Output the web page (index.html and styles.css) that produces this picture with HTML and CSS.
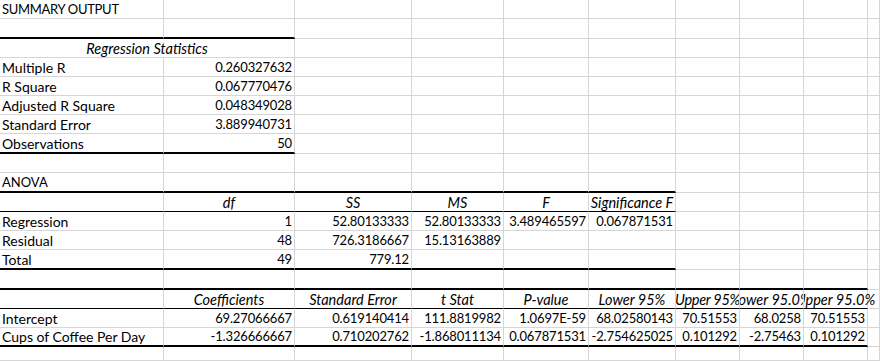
FILE: index.html
```html
<!DOCTYPE html>
<html>
<head>
<meta charset="utf-8">
<link rel="stylesheet" href="styles.css">
<title>Summary Output</title>
</head>
<body>
<div class="sheet">
  <!-- row 1 -->
  <div class="c cap tight">SUMMARY OUTPUT</div><div class="c"></div><div class="c"></div><div class="c"></div><div class="c"></div><div class="c"></div><div class="c"></div><div class="c"></div><div class="c"></div><div class="c"></div>
  <!-- row 2 -->
  <div class="c tb"></div><div class="c tb"></div><div class="c"></div><div class="c"></div><div class="c"></div><div class="c"></div><div class="c"></div><div class="c"></div><div class="c"></div><div class="c"></div>
  <!-- row 3 -->
  <div class="c m span2">Regression Statistics</div><div class="c"></div><div class="c"></div><div class="c"></div><div class="c"></div><div class="c"></div><div class="c"></div><div class="c"></div><div class="c"></div>
  <!-- row 4 -->
  <div class="c">Multiple R</div><div class="c r">0.260327632</div><div class="c"></div><div class="c"></div><div class="c"></div><div class="c"></div><div class="c"></div><div class="c"></div><div class="c"></div><div class="c"></div>
  <!-- row 5 -->
  <div class="c">R Square</div><div class="c r">0.067770476</div><div class="c"></div><div class="c"></div><div class="c"></div><div class="c"></div><div class="c"></div><div class="c"></div><div class="c"></div><div class="c"></div>
  <!-- row 6 -->
  <div class="c">Adjusted R Square</div><div class="c r">0.048349028</div><div class="c"></div><div class="c"></div><div class="c"></div><div class="c"></div><div class="c"></div><div class="c"></div><div class="c"></div><div class="c"></div>
  <!-- row 7 -->
  <div class="c">Standard Error</div><div class="c r">3.889940731</div><div class="c"></div><div class="c"></div><div class="c"></div><div class="c"></div><div class="c"></div><div class="c"></div><div class="c"></div><div class="c"></div>
  <!-- row 8 -->
  <div class="c tb">Observations</div><div class="c r tb">50</div><div class="c"></div><div class="c"></div><div class="c"></div><div class="c"></div><div class="c"></div><div class="c"></div><div class="c"></div><div class="c"></div>
  <!-- row 9 -->
  <div class="c"></div><div class="c"></div><div class="c"></div><div class="c"></div><div class="c"></div><div class="c"></div><div class="c"></div><div class="c"></div><div class="c"></div><div class="c"></div>
  <!-- row 10 -->
  <div class="c tb cap">ANOVA</div><div class="c tb"></div><div class="c tb"></div><div class="c tb"></div><div class="c tb"></div><div class="c tb"></div><div class="c"></div><div class="c"></div><div class="c"></div><div class="c"></div>
  <!-- row 11 -->
  <div class="c hb"></div><div class="c m hb">df</div><div class="c m hb">SS</div><div class="c m hb">MS</div><div class="c m hb">F</div><div class="c m hb">Significance F</div><div class="c"></div><div class="c"></div><div class="c"></div><div class="c"></div>
  <!-- row 12 -->
  <div class="c">Regression</div><div class="c r">1</div><div class="c r">52.80133333</div><div class="c r">52.80133333</div><div class="c r">3.489465597</div><div class="c r">0.067871531</div><div class="c"></div><div class="c"></div><div class="c"></div><div class="c"></div>
  <!-- row 13 -->
  <div class="c">Residual</div><div class="c r">48</div><div class="c r">726.3186667</div><div class="c r">15.13163889</div><div class="c"></div><div class="c"></div><div class="c"></div><div class="c"></div><div class="c"></div><div class="c"></div>
  <!-- row 14 -->
  <div class="c tb">Total</div><div class="c r tb">49</div><div class="c r tb">779.12</div><div class="c tb"></div><div class="c tb"></div><div class="c tb"></div><div class="c"></div><div class="c"></div><div class="c"></div><div class="c"></div>
  <!-- row 15 -->
  <div class="c tb"></div><div class="c tb"></div><div class="c tb"></div><div class="c tb"></div><div class="c tb"></div><div class="c tb"></div><div class="c tb"></div><div class="c tb"></div><div class="c tb"></div><div class="c"></div>
  <!-- row 16 -->
  <div class="c hb"></div><div class="c m hb">Coefficients</div><div class="c m hb">Standard Error</div><div class="c m hb">t Stat</div><div class="c m hb">P-value</div><div class="c m hb">Lower 95%</div><div class="c m hb clip fit">Upper 95%</div><div class="c m hb clip">Lower 95.0%</div><div class="c m hb clipl">Upper 95.0%</div><div class="c"></div>
  <!-- row 17 -->
  <div class="c">Intercept</div><div class="c r">69.27066667</div><div class="c r">0.619140414</div><div class="c r">111.8819982</div><div class="c r">1.0697E-59</div><div class="c r">68.02580143</div><div class="c r">70.51553</div><div class="c r">68.0258</div><div class="c r">70.51553</div><div class="c"></div>
  <!-- row 18 -->
  <div class="c tb">Cups of Coffee Per Day</div><div class="c r tb">-1.326666667</div><div class="c r tb">0.710202762</div><div class="c r tb">-1.868011134</div><div class="c r tb">0.067871531</div><div class="c r tb">-2.754625025</div><div class="c r tb">0.101292</div><div class="c r tb">-2.75463</div><div class="c r tb">0.101292</div><div class="c"></div>
  <!-- row 19 -->
  <div class="c"></div><div class="c"></div><div class="c"></div><div class="c"></div><div class="c"></div><div class="c"></div><div class="c"></div><div class="c"></div><div class="c"></div><div class="c"></div>
</div>
</body>
</html>
```

FILE: styles.css
```css
html, body {
  margin: 0;
  padding: 0;
  background: #ffffff;
}

.sheet {
  width: 880px;
  height: 361px;
  overflow: hidden;
  display: grid;
  grid-template-columns: 164px 131px 117px 92px 85px 87px 64px 64px 64px 1fr;
  grid-template-rows: 19px 20px 19px 19px 19px 19px 19px 20px 19px 20px 19px 19px 19px 20px 20px 19px 19px 19px 1fr;
  font-family: "Lato", "Carlito", "Liberation Sans", sans-serif;
  font-size: 14px;
  color: #000000;
}

.c {
  box-sizing: border-box;
  border-right: 1px solid #d6d6d6;
  border-bottom: 1px solid #d6d6d6;
  padding: 0 2px 1px 2px;
  display: flex;
  align-items: flex-end;
  justify-content: flex-start;
  white-space: nowrap;
  line-height: 15px;
  min-width: 0;
}

.cap {
  font-size: 13px;
}

.tight {
  letter-spacing: -0.3px;
}

.r {
  justify-content: flex-end;
  font-size: 13px;
  letter-spacing: -0.15px;
}

.m {
  justify-content: center;
  font-style: italic;
  font-size: 14.5px;
}

.fit {
  padding: 0 1px 1px 1px;
  letter-spacing: -0.3px;
}

.span2 {
  grid-column: span 2;
}

.tb {
  border-bottom: 2px solid #000000;
}

.hb {
  border-bottom: 1px solid #000000;
}

.clip {
  overflow: hidden;
}

.clipl {
  clip-path: inset(0 -40px 0 0);
}
```
